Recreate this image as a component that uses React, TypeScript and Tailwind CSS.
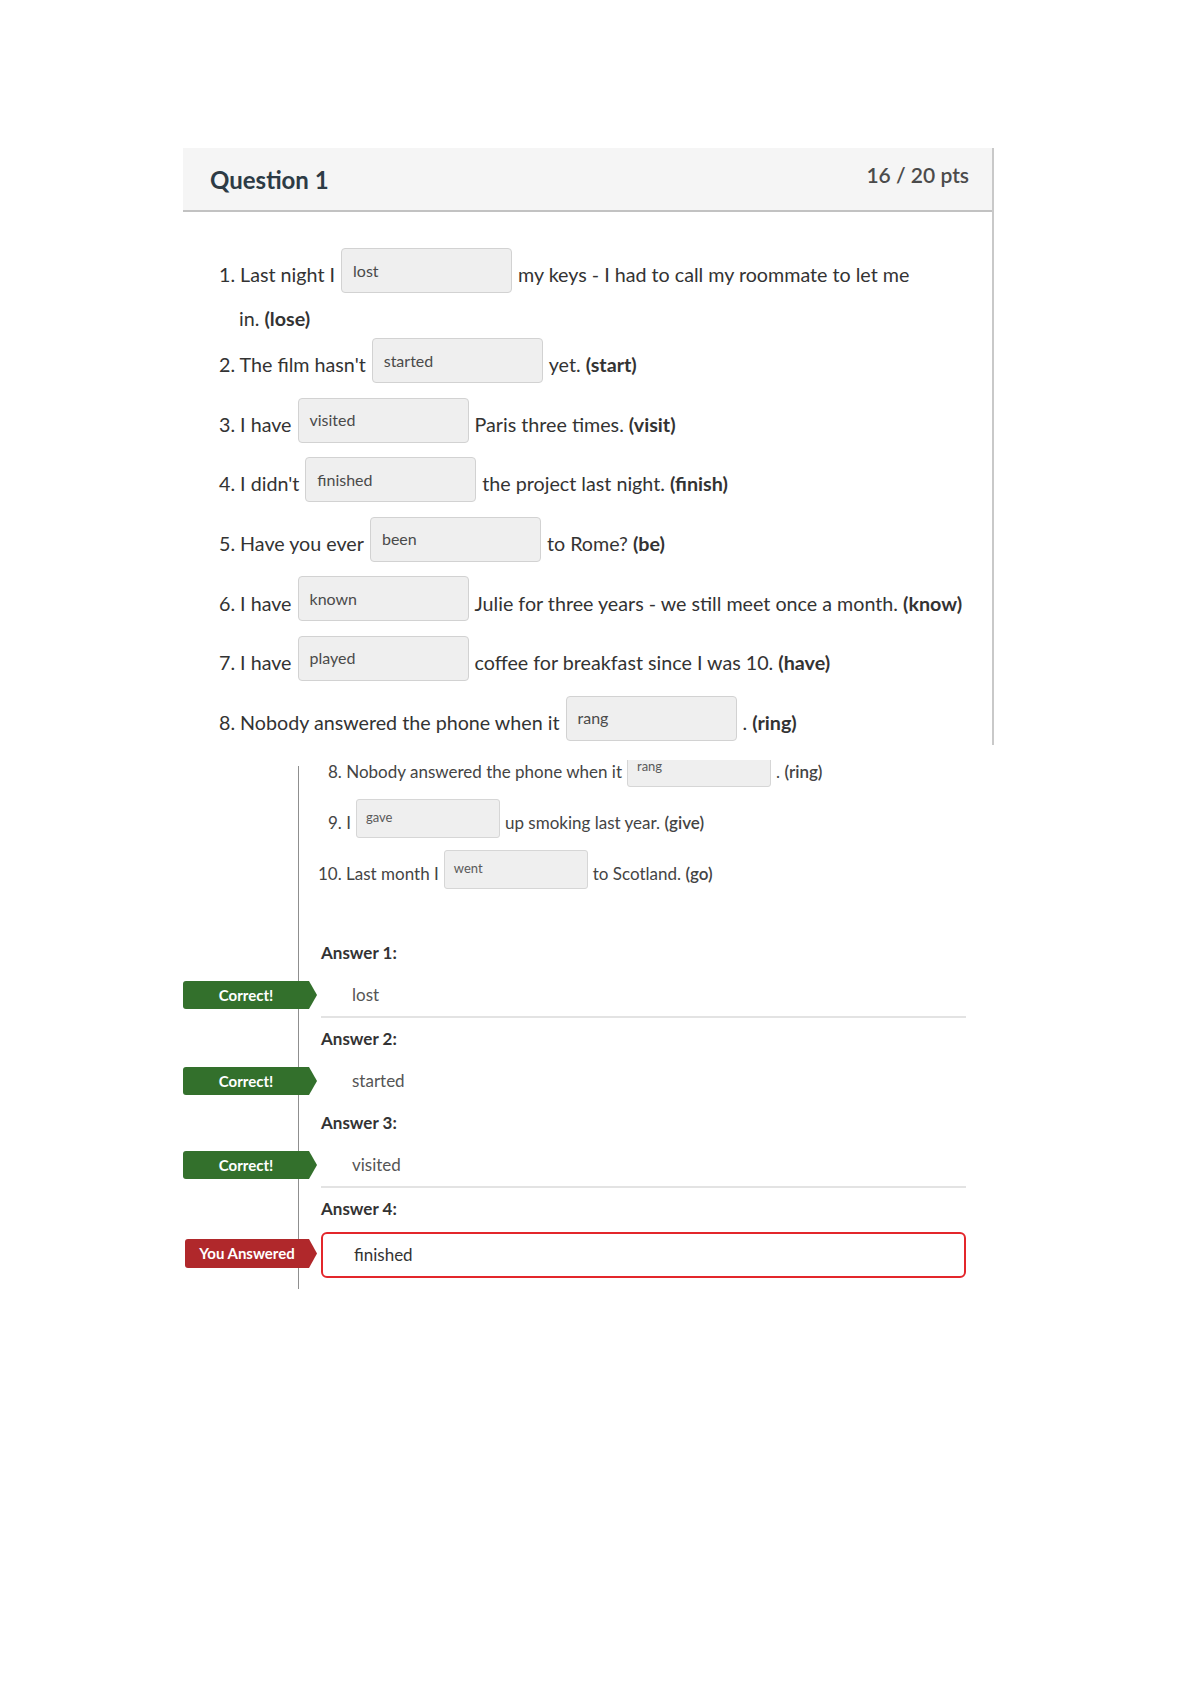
type Item = { lead: string; ans: string; tail: string; hint: string };

const bigRows: Item[] = [
  { lead: "2. The film hasn't", ans: "started", tail: "yet.", hint: "(start)" },
  { lead: "3. I have", ans: "visited", tail: "Paris three times.", hint: "(visit)" },
  { lead: "4. I didn't", ans: "finished", tail: "the project last night.", hint: "(finish)" },
  { lead: "5. Have you ever", ans: "been", tail: "to Rome?", hint: "(be)" },
  {
    lead: "6. I have",
    ans: "known",
    tail: "Julie for three years - we still meet once a month.",
    hint: "(know)",
  },
  { lead: "7. I have", ans: "played", tail: "coffee for breakfast since I was 10.", hint: "(have)" },
  { lead: "8. Nobody answered the phone when it", ans: "rang", tail: ".", hint: "(ring)" },
];

const smallRows = [
  { lead: "8. Nobody answered the phone when it", ans: "rang", tail: ".", hint: "(ring)", pad: "pl-[29px]" },
  { lead: "9. I", ans: "gave", tail: "up smoking last year.", hint: "(give)", pad: "pl-[29px]" },
  { lead: "10. Last month I", ans: "went", tail: "to Scotland.", hint: "(go)", pad: "pl-[19px]" },
];

function BigBox({ value }: { value: string }) {
  return (
    <span className="flex items-center w-[171px] h-[45px] shrink-0 bg-[#efefef] border border-[#d2d2d2] rounded-[4px] pl-[11px] text-[16px] leading-none text-[#4a4a4a]">
      {value}
    </span>
  );
}

function SmallBox({ value }: { value: string }) {
  return (
    <span className="flex items-center w-[144px] h-[39px] shrink-0 bg-[#efefef] border border-[#d6d6d6] rounded-[3px] pl-[9px] pb-[3px] text-[13px] leading-none text-[#5a5a5a]">
      {value}
    </span>
  );
}

function Badge({ ok }: { ok: boolean }) {
  return (
    <span
      className={`relative z-10 shrink-0 flex items-center justify-center pr-[8px] rounded-l-[3px] text-[15px] font-bold leading-none text-white [clip-path:polygon(0_0,calc(100%-8px)_0,100%_50%,calc(100%-8px)_100%,0_100%)] ${
        ok ? "w-[134px] h-[28px] bg-[#33702c]" : "ml-[2px] w-[132px] h-[29px] bg-[#b0282b]"
      }`}
    >
      {ok ? "Correct!" : "You Answered"}
    </span>
  );
}

function Label({ text }: { text: string }) {
  return (
    <div className="flex">
      <div className="w-[115px] shrink-0" />
      <div className="w-[668px] h-[42px] border-l border-[#8f8f8f] pl-[22px] flex items-center text-[17px] font-bold text-[#333]">
        {text}
      </div>
    </div>
  );
}

function Value({ text }: { text: string }) {
  return (
    <div className="flex">
      <div className="w-[115px] h-[42px] shrink-0 flex items-center">
        <Badge ok />
      </div>
      <div className="w-[668px] h-[42px] border-l border-[#8f8f8f] pl-[53px] flex items-center text-[17px] text-[#555]">
        {text}
      </div>
    </div>
  );
}

function Divider() {
  return (
    <div className="flex">
      <div className="w-[115px] shrink-0" />
      <div className="w-[668px] border-l border-[#8f8f8f] pl-[22px]">
        <div className="h-[2px] bg-[#e3e3e3]" />
      </div>
    </div>
  );
}

export default function App() {
  return (
    <div className="w-[1200px] min-h-[1698px] bg-white font-['Lato',sans-serif] text-[#333]">
      <div className="pt-[148px] pl-[183px]">
        {/* first screenshot: question panel */}
        <div className="w-[811px] h-[597px] overflow-hidden border-r-2 border-[#c9c9c9]">
          <div className="h-[64px] bg-[#f5f5f5] border-b-2 border-[#c2c2c2] flex justify-between pl-[27px] pr-[23px]">
            <span className="pt-[20px] text-[24px] font-bold leading-none text-[#2d3b45]">Question 1</span>
            <span className="pt-[16px] text-[21px] font-semibold leading-none text-[#4b4b4b]">16 / 20 pts</span>
          </div>

          <div className="pt-[36px] pl-[36px] flex flex-col text-[19.7px] leading-none">
            <div className="flex items-center gap-[6px] h-[45px]">
              <span className="pt-[9px] whitespace-nowrap">1. Last night I</span>
              <BigBox value="lost" />
              <span className="pt-[9px] whitespace-nowrap">my keys - I had to call my roommate to let me</span>
            </div>
            <div className="h-[45px] pt-[16px] pl-[20px]">
              in. <b>(lose)</b>
            </div>
            <div className="flex flex-col gap-[14.6px]">
              {bigRows.map((r) => (
                <div key={r.lead} className="flex items-center gap-[6px] h-[45px]">
                  <span className="pt-[9px] whitespace-nowrap">{r.lead}</span>
                  <BigBox value={r.ans} />
                  <span className="pt-[9px] whitespace-nowrap">
                    {r.tail} <b>{r.hint}</b>
                  </span>
                </div>
              ))}
            </div>
          </div>
        </div>

        {/* second screenshot: rest of the question and answers */}
        <div className="mt-[15px] flex flex-col">
          <div className="flex">
            <div className="w-[115px] shrink-0" />
            <div className="w-[668px] h-[129px] overflow-hidden">
              <div className="mt-[6px] h-[123px] border-l border-[#8f8f8f] flex flex-col">
                <div className="-mt-[18px] flex flex-col gap-[12px] text-[17px] leading-none text-[#444]">
                  {smallRows.map((r) => (
                    <div key={r.lead} className={`flex items-center gap-[5px] h-[39px] ${r.pad}`}>
                      <span className="pt-[8px] whitespace-nowrap">{r.lead}</span>
                      <SmallBox value={r.ans} />
                      <span className="pt-[8px] whitespace-nowrap">
                        {r.tail} <span className="font-semibold">{r.hint}</span>
                      </span>
                    </div>
                  ))}
                </div>
              </div>
            </div>
          </div>
          <div className="flex">
            <div className="w-[115px] shrink-0" />
            <div className="w-[668px] h-[43px] border-l border-[#8f8f8f]" />
          </div>

          <Label text="Answer 1:" />
          <Value text="lost" />
          <Divider />
          <Label text="Answer 2:" />
          <Value text="started" />
          <Label text="Answer 3:" />
          <Value text="visited" />
          <Divider />
          <Label text="Answer 4:" />
          <div className="flex">
            <div className="w-[115px] shrink-0 pt-[9px]">
              <Badge ok={false} />
            </div>
            <div className="w-[668px] border-l border-[#8f8f8f] pl-[22px] pt-[2px] pb-[11px]">
              <div className="h-[46px] border-2 border-[#e3262b] rounded-[6px] pl-[31px] flex items-center text-[17px] text-[#333]">
                finished
              </div>
            </div>
          </div>
        </div>
      </div>
    </div>
  );
}
